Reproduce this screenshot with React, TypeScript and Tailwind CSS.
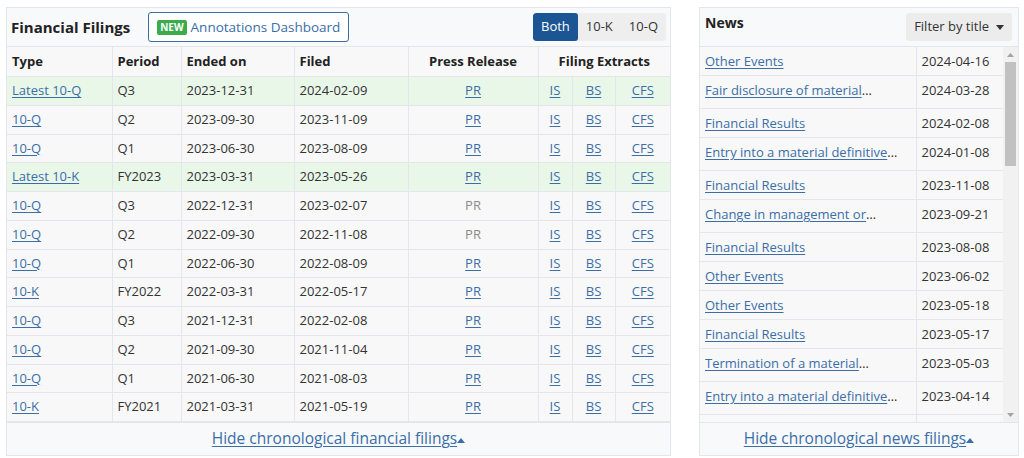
import React from 'react';

type Filing = {
  type: string;
  period: string;
  ended: string;
  filed: string;
  pr: boolean;
  latest?: boolean;
};

const filings: Filing[] = [
  { type: 'Latest 10-Q', period: 'Q3', ended: '2023-12-31', filed: '2024-02-09', pr: true, latest: true },
  { type: '10-Q', period: 'Q2', ended: '2023-09-30', filed: '2023-11-09', pr: true },
  { type: '10-Q', period: 'Q1', ended: '2023-06-30', filed: '2023-08-09', pr: true },
  { type: 'Latest 10-K', period: 'FY2023', ended: '2023-03-31', filed: '2023-05-26', pr: true, latest: true },
  { type: '10-Q', period: 'Q3', ended: '2022-12-31', filed: '2023-02-07', pr: false },
  { type: '10-Q', period: 'Q2', ended: '2022-09-30', filed: '2022-11-08', pr: false },
  { type: '10-Q', period: 'Q1', ended: '2022-06-30', filed: '2022-08-09', pr: true },
  { type: '10-K', period: 'FY2022', ended: '2022-03-31', filed: '2022-05-17', pr: true },
  { type: '10-Q', period: 'Q3', ended: '2021-12-31', filed: '2022-02-08', pr: true },
  { type: '10-Q', period: 'Q2', ended: '2021-09-30', filed: '2021-11-04', pr: true },
  { type: '10-Q', period: 'Q1', ended: '2021-06-30', filed: '2021-08-03', pr: true },
  { type: '10-K', period: 'FY2021', ended: '2021-03-31', filed: '2021-05-19', pr: true },
];

const news = [
  { title: 'Other Events', date: '2024-04-16' },
  { title: 'Fair disclosure of material information', date: '2024-03-28', long: true },
  { title: 'Financial Results', date: '2024-02-08' },
  { title: 'Entry into a material definitive agreement', date: '2024-01-08', long: true },
  { title: 'Financial Results', date: '2023-11-08' },
  { title: 'Change in management or control', date: '2023-09-21', long: true },
  { title: 'Financial Results', date: '2023-08-08' },
  { title: 'Other Events', date: '2023-06-02' },
  { title: 'Other Events', date: '2023-05-18' },
  { title: 'Financial Results', date: '2023-05-17' },
  { title: 'Termination of a material definitive agreement', date: '2023-05-03', long: true },
  { title: 'Entry into a material definitive agreement', date: '2023-04-14', long: true },
  { title: 'Financial Results', date: '2023-02-07' },
  { title: 'Other Events', date: '2023-01-12' },
];

const link = 'text-[#3b6ea8] underline underline-offset-2';
const cell = 'border-r border-[#e3e6ea] px-[5px]';

const Caret = ({ up = false }: { up?: boolean }) => (
  <svg width="8" height="5" viewBox="0 0 8 5" className="inline-block">
    <path d={up ? 'M0 5 L4 0 L8 5 Z' : 'M0 0 L8 0 L4 5 Z'} fill="currentColor" />
  </svg>
);

const ScrollArrow = ({ up = false }: { up?: boolean }) => (
  <div className="flex h-[15px] items-center justify-center text-[#a3a3a3]">
    <svg width="7" height="4" viewBox="0 0 7 4">
      <path d={up ? 'M0 4 L3.5 0 L7 4 Z' : 'M0 0 L7 0 L3.5 4 Z'} fill="currentColor" />
    </svg>
  </div>
);

export default function App() {
  return (
    <div
      className="flex gap-[28px] bg-white pl-[6px] pt-[7px] text-[13px] text-[#333]"
      style={{ fontFamily: '"Open Sans", "Noto Sans", sans-serif' }}
    >
      {/* Financial filings */}
      <div className="flex w-[665px] flex-col border border-[#e3e6ea]">
        <div className="flex h-[38px] items-center justify-between bg-[#f8f9fa] pl-[4px] pr-[4px]">
          <div className="flex items-center gap-[18px]">
            <h2 className="text-[15px] font-bold text-[#222]">Financial Filings</h2>
            <button className="flex h-[30px] items-center gap-[4px] rounded-[3px] border border-[#3b6ea8] bg-white px-[8px] text-[13.5px] text-[#3b6ea8]">
              <span className="rounded-[2px] bg-[#3bab4b] px-[3px] text-[10px] font-bold leading-[15px] text-white">
                NEW
              </span>
              Annotations Dashboard
            </button>
          </div>
          <div className="flex h-[28px] overflow-hidden rounded-[3px] bg-[#eeeeee] text-[13px]">
            <span className="flex items-center rounded-[3px] bg-[#1b5593] px-[8px] text-white">Both</span>
            <span className="flex items-center px-[8px]">10-K</span>
            <span className="flex items-center px-[8px]">10-Q</span>
          </div>
        </div>
        <table className="w-full border-collapse border-t border-[#e3e6ea] bg-[#f8f8f8]">
          <thead>
            <tr className="h-[30px] border-b border-[#e3e6ea] text-left font-bold text-[#222]">
              <th className={`${cell} w-[105px]`}>Type</th>
              <th className={`${cell} w-[69px]`}>Period</th>
              <th className={`${cell} w-[113px]`}>Ended on</th>
              <th className={`${cell} w-[114px]`}>Filed</th>
              <th className={`${cell} w-[130px] text-center`}>Press Release</th>
              <th className="px-[5px] text-center" colSpan={3}>
                Filing Extracts
              </th>
            </tr>
          </thead>
          <tbody>
            {filings.map((f, i) => (
              <tr
                key={i}
                className={`h-[28.75px] border-b border-[#e3e6ea] ${f.latest ? 'bg-[#e9f7e9]' : ''}`}
              >
                <td className={cell}>
                  <a className={link}>{f.type}</a>
                </td>
                <td className={cell}>{f.period}</td>
                <td className={cell}>{f.ended}</td>
                <td className={cell}>{f.filed}</td>
                <td className={`${cell} text-center`}>
                  {f.pr ? <a className={link}>PR</a> : <span className="text-[#8a8a8a]">PR</span>}
                </td>
                <td className={`${cell} w-[34px] text-center`}>
                  <a className={link}>IS</a>
                </td>
                <td className={`${cell} w-[43px] text-center`}>
                  <a className={link}>BS</a>
                </td>
                <td className="px-[5px] text-center">
                  <a className={link}>CFS</a>
                </td>
              </tr>
            ))}
          </tbody>
        </table>
        <div className="flex h-[33px] items-center justify-center border-t border-[#e3e6ea] bg-[#f8f9fa] text-[15.5px]">
          <a className={link}>Hide chronological financial filings</a>
          <span className="text-[#3b6ea8]">
            <Caret up />
          </span>
        </div>
      </div>

      {/* News */}
      <div className="flex w-[320px] flex-col border border-[#e3e6ea]">
        <div className="flex h-[38px] items-start justify-between bg-[#f8f9fa] pl-[5px] pr-[6px] pt-[5px]">
          <h2 className="-mt-[1px] text-[14px] font-bold text-[#222]">News</h2>
          <button className="flex h-[28px] items-center gap-[7px] rounded-[3px] bg-[#ececec] px-[8px] text-[13px]">
            Filter by title
            <Caret />
          </button>
        </div>
        <div className="flex h-[376px] border-t border-[#e3e6ea] bg-[#f8f8f8]">
          <div className="flex-1 overflow-hidden">
            <table className="w-full border-collapse">
              <tbody>
                {news.map((n, i) => (
                  <tr key={i} className="border-b border-[#e3e6ea] align-top">
                    <td className="w-[216px] border-r border-[#e3e6ea] px-[5px] pb-[4px] pt-[5px]">
                      <div
                        className={`line-clamp-1 leading-[19px] ${n.long ? 'h-[23px]' : 'h-[19px]'}`}
                      >
                        <a className={link}>{n.title}</a>
                      </div>
                    </td>
                    <td className="px-[5px] pt-[5px] leading-[19px]">{n.date}</td>
                  </tr>
                ))}
              </tbody>
            </table>
          </div>
          <div className="flex w-[15px] flex-col bg-[#f1f1f1]">
            <ScrollArrow up />
            <div className="mx-[2px] h-[104px] bg-[#c1c1c1]" />
            <div className="flex-1" />
            <ScrollArrow />
          </div>
        </div>
        <div className="flex h-[33px] items-center justify-center border-t border-[#e3e6ea] bg-[#f8f9fa] text-[15.5px]">
          <a className={link}>Hide chronological news filings</a>
          <span className="text-[#3b6ea8]">
            <Caret up />
          </span>
        </div>
      </div>
    </div>
  );
}
